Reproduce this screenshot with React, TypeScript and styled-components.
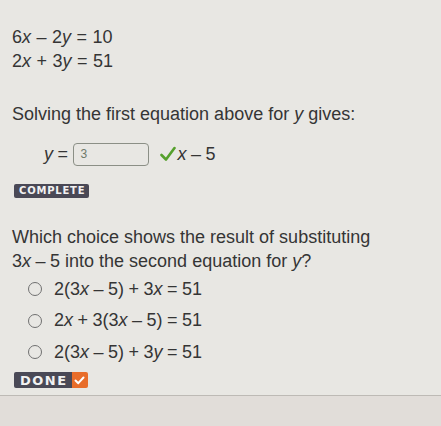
import React from "react";
import styled, { createGlobalStyle } from "styled-components";

const Global = createGlobalStyle`
  html, body {
    margin: 0;
    padding: 0;
    background: #e8e7e3;
  }
  body {
    font-family: "Liberation Sans", Arial, sans-serif;
    color: #353535;
  }
`;

const Page = styled.div`
  width: 441px;
  height: 426px;
  overflow: hidden;
  display: flex;
  flex-direction: column;
`;

const Content = styled.div`
  padding: 25px 0 0 12px;
  display: flex;
  flex-direction: column;
`;

const Line = styled.div<{ $mt?: number }>`
  font-size: 18px;
  line-height: 24px;
  margin-top: ${(p) => p.$mt ?? 0}px;
  white-space: nowrap;
`;

const V = styled.i`
  font-style: italic;
`;

// math operator with a bit of breathing room either side
const Op = styled.span<{ $gap?: number }>`
  margin: 0 ${(p) => p.$gap ?? 4.5}px;
`;

const AnswerRow = styled.div`
  display: flex;
  align-items: center;
  margin: 16px 0 0 32px;
  font-size: 18px;
  height: 24px;
  white-space: pre;
`;

const Input = styled.div`
  width: 67px;
  height: 21px;
  border: 1.5px solid #8b8f86;
  border-radius: 4px;
  font-size: 12px;
  color: #6e7a6a;
  display: flex;
  align-items: center;
  padding-left: 7px;
  box-sizing: content-box;
`;

const Check = styled.svg`
  margin-left: 11px;
  margin-right: 2px;
`;

const Badge = styled.div<{ $mt: number }>`
  display: inline-flex;
  align-self: flex-start;
  align-items: stretch;
  margin-top: ${(p) => p.$mt}px;
  margin-left: 2px;
  border-radius: 2px;
  overflow: hidden;
  font-family: "DejaVu Sans", Verdana, sans-serif;
  font-weight: bold;
  color: #f2f2f2;
`;

const BadgeLabel = styled.span<{ $size: number; $h: number; $ls: number; $px: string }>`
  background: #4a4956;
  font-size: ${(p) => p.$size}px;
  letter-spacing: ${(p) => p.$ls}px;
  height: ${(p) => p.$h}px;
  padding: ${(p) => p.$px};
  display: flex;
  align-items: center;
  line-height: 1;
`;

const BadgeTick = styled.span`
  background: #e86d2a;
  width: 16px;
  display: flex;
  align-items: center;
  justify-content: center;
`;

const Options = styled.div`
  display: flex;
  flex-direction: column;
  gap: 7.5px;
  margin: 4px 0 0 16px;
`;

const Option = styled.div`
  display: flex;
  align-items: center;
  height: 24px;
  font-size: 18px;
  white-space: pre;
`;

const Radio = styled.span`
  width: 12px;
  height: 12px;
  border: 1.5px solid #707070;
  border-radius: 50%;
  margin-right: 12px;
  flex-shrink: 0;
`;

const Divider = styled.div`
  margin-top: 7px;
  height: 1px;
  background: #bdbab5;
`;

const Footer = styled.div`
  flex: 1;
  background: #e1ddd9;
`;

const opts = [
  <>2(3<V>x</V><Op>–</Op>5)<Op>+</Op>3<V>x</V><Op>=</Op>51</>,
  <>2<V>x</V><Op>+</Op>3(3<V>x</V><Op>–</Op>5)<Op>=</Op>51</>,
  <>2(3<V>x</V><Op>–</Op>5)<Op>+</Op>3<V>y</V><Op>=</Op>51</>,
];

export default function App() {
  return (
    <Page>
      <Global />
      <Content>
        <Line>6<V>x</V><Op $gap={5.5}>–</Op>2<V>y</V><Op $gap={5.5}>=</Op>10</Line>
        <Line>2<V>x</V><Op $gap={5.5}>+</Op>3<V>y</V><Op $gap={5.5}>=</Op>51</Line>
        <Line $mt={29}>
          Solving the first equation above for <V>y</V> gives:
        </Line>
        <AnswerRow>
          <V>y</V><Op>=</Op>
          <Input>3</Input>
          <Check width="16" height="16" viewBox="0 0 16 16">
            <path d="M1.5 9 L6 13.5 L14.5 2" fill="none" stroke="#55a02c" strokeWidth="2.6" strokeLinecap="round" strokeLinejoin="round" />
          </Check>
          <V>x</V><Op>–</Op>5
        </AnswerRow>
        <Badge $mt={18}>
          <BadgeLabel $size={10} $h={14} $ls={0.8} $px="0 4px 0 5px">COMPLETE</BadgeLabel>
        </Badge>
        <Line $mt={27}>Which choice shows the result of substituting</Line>
        <Line>
          3<V>x</V><Op>–</Op>5 into the second equation for <V>y</V>?
        </Line>
        <Options>
          {opts.map((o, i) => (
            <Option key={i}>
              <Radio />
              {o}
            </Option>
          ))}
        </Options>
        <Badge $mt={8}>
          <BadgeLabel $size={13} $h={16} $ls={1.5} $px="0 4px 0 6px">DONE</BadgeLabel>
          <BadgeTick>
            <svg width="11" height="9" viewBox="0 0 11 9">
              <path d="M1.5 4.5 L4.3 7.2 L9.5 1.5" fill="none" stroke="#fff" strokeWidth="2" strokeLinecap="round" strokeLinejoin="round" />
            </svg>
          </BadgeTick>
        </Badge>
      </Content>
      <Divider />
      <Footer />
    </Page>
  );
}
